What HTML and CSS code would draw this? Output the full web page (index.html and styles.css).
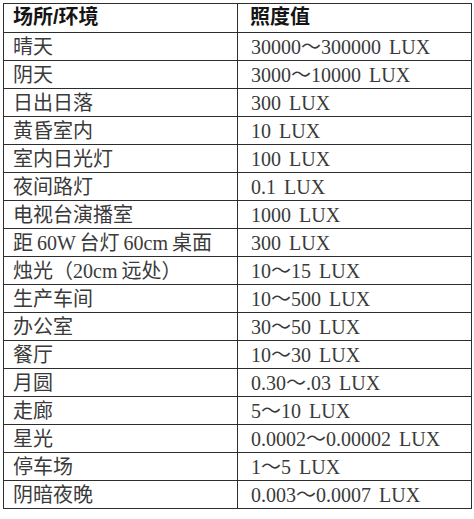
FILE: index.html
```html
<!DOCTYPE html>
<html lang="zh-CN">
<head>
<meta charset="utf-8">
<title>照度值</title>
<link rel="stylesheet" href="styles.css">
</head>
<body>
<div class="lux-table">
  <div class="cell head c1">场所/环境</div><div class="cell head c2">照度值</div>
  <div class="cell c1">晴天</div><div class="cell c2">30000～300000 LUX</div>
  <div class="cell c1">阴天</div><div class="cell c2">3000～10000 LUX</div>
  <div class="cell c1">日出日落</div><div class="cell c2">300 LUX</div>
  <div class="cell c1">黄昏室内</div><div class="cell c2">10 LUX</div>
  <div class="cell c1">室内日光灯</div><div class="cell c2">100 LUX</div>
  <div class="cell c1">夜间路灯</div><div class="cell c2">0.1 LUX</div>
  <div class="cell c1">电视台演播室</div><div class="cell c2">1000 LUX</div>
  <div class="cell c1">距 60W 台灯 60cm 桌面</div><div class="cell c2">300 LUX</div>
  <div class="cell c1">烛光（20cm 远处）</div><div class="cell c2">10～15 LUX</div>
  <div class="cell c1">生产车间</div><div class="cell c2">10～500 LUX</div>
  <div class="cell c1">办公室</div><div class="cell c2">30～50 LUX</div>
  <div class="cell c1">餐厅</div><div class="cell c2">10～30 LUX</div>
  <div class="cell c1">月圆</div><div class="cell c2">0.30～.03 LUX</div>
  <div class="cell c1">走廊</div><div class="cell c2">5～10 LUX</div>
  <div class="cell c1">星光</div><div class="cell c2">0.0002～0.00002 LUX</div>
  <div class="cell c1">停车场</div><div class="cell c2">1～5 LUX</div>
  <div class="cell c1">阴暗夜晚</div><div class="cell c2">0.003～0.0007 LUX</div>
</div>
</body>
</html>
```
FILE: styles.css
```css
html, body {
  margin: 0;
  padding: 0;
  background: #ffffff;
}

body {
  padding: 3px 0 0 3px;
  font-family: "Liberation Serif", "Noto Sans CJK SC", serif;
  font-size: 20px;
  color: #3a3a3a;
}

.lux-table {
  display: grid;
  grid-template-columns: 234px 234px;
  grid-template-rows: 29px;
  grid-auto-rows: 28px;
  width: 468px;
  border-top: 1px solid #2e2e2e;
  border-left: 1px solid #2e2e2e;
}

.cell {
  box-sizing: border-box;
  border-right: 1px solid #2e2e2e;
  border-bottom: 1px solid #2e2e2e;
  white-space: nowrap;
  overflow: hidden;
  line-height: 24px;
  padding-top: 2px;
}

.c1 {
  padding-left: 9px;
  word-spacing: -1px;
}

.c2 {
  padding-left: 13px;
  word-spacing: 3px;
}

.head {
  font-weight: bold;
  color: #151515;
  font-family: "Liberation Sans", "Noto Sans CJK SC", sans-serif;
  padding-top: 1px;
}

.head.c2 {
  padding-left: 12px;
}
```
